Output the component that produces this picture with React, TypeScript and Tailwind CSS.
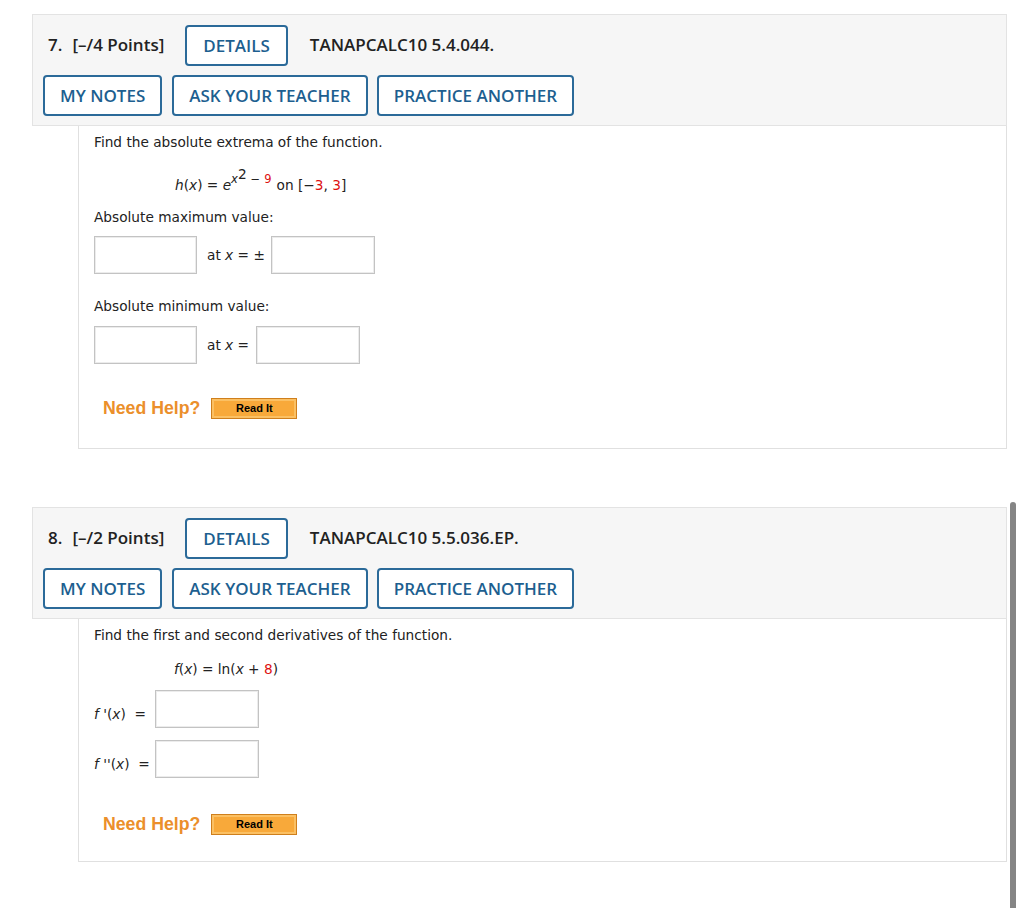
import React from "react";

const HEAD_FONT = { fontFamily: '"Open Sans", "Liberation Sans", sans-serif' };
const BODY_FONT = { fontFamily: '"DejaVu Sans", Verdana, sans-serif' };
const HELP_FONT = { fontFamily: '"Liberation Sans", Arial, sans-serif' };

function BlueButton({ label, className = "" }: { label: string; className?: string }) {
  return (
    <button
      className={
        "h-[41px] border-2 border-[#2b6a99] rounded-[4px] bg-white text-[17px] font-semibold text-[#1d5f90] leading-none " +
        className
      }
      style={HEAD_FONT}
    >
      {label}
    </button>
  );
}

function Header({ num, points, code }: { num: number; points: number; code: string }) {
  return (
    <div
      className="bg-[#f6f6f6] border border-[#e3e3e3] pt-[10px] pb-[9px] pl-[10px]"
      style={HEAD_FONT}
    >
      <div className="flex items-center h-[40px]">
        <span className="ml-[5px] text-[17px] font-semibold text-[#222]">
          {num}.<span className="ml-[10px]">[–/{points} Points]</span>
        </span>
        <BlueButton label="DETAILS" className="ml-[21px] h-[40px] px-[16px]" />
        <span className="ml-[22px] text-[17px] font-semibold text-[#222]">{code}</span>
      </div>
      <div className="flex items-center mt-[10px]">
        <BlueButton label="MY NOTES" className="px-[15px]" />
        <BlueButton label="ASK YOUR TEACHER" className="ml-[10px] px-[15px]" />
        <BlueButton label="PRACTICE ANOTHER" className="ml-[9px] px-[15px]" />
      </div>
    </div>
  );
}

function Box({ w = 104 }: { w?: number }) {
  return (
    <div
      className={
        "h-[38px] border border-[#c3c3c3] bg-white shadow-[inset_0_0_0_1px_#ececec] " +
        (w === 104 ? "w-[104px]" : "w-[103px]")
      }
    />
  );
}

function NeedHelp() {
  return (
    <div className="flex items-center ml-[9px] h-[20px]">
      <span className="text-[17.7px] font-bold text-[#eb8f2b]" style={HELP_FONT}>
        Need Help?
      </span>
      <span
        className="ml-[11px] w-[86px] h-[21px] flex items-center justify-center bg-[#f8a93a] border border-[#cf7f1c] shadow-[inset_0_0_0_2px_#fbc063] text-[11px] font-bold text-black"
        style={HELP_FONT}
      >
        Read It
      </span>
    </div>
  );
}

function Red({ children }: { children: React.ReactNode }) {
  return <span className="text-[#d11]">{children}</span>;
}

export default function App() {
  return (
    <div className="relative min-h-[908px] bg-white pl-[32px] pt-[14px] text-[#222]">
      {/* question 7 */}
      <div className="w-[975px]">
        <Header num={7} points={4} code="TANAPCALC10 5.4.044." />
        <div
          className="ml-[46px] border border-t-0 border-[#e0e0e0] pl-[15px] pt-[6px] pb-[30px] text-[13.7px] leading-[20px]"
          style={BODY_FONT}
        >
          <div>Find the absolute extrema of the function.</div>
          <div className="mt-[23px] pl-[81px] h-[20px] flex items-baseline">
            <i>h</i>(<i>x</i>)&nbsp;=&nbsp;<i>e</i>
            <span className="relative -top-[7px] text-[11.5px] leading-none">
              <i>x</i>
              <span className="relative -top-[4px] text-[13.7px]">2</span>
              <span className="ml-[4px]">−</span>
              <span className="ml-[4px]">
                <Red>9</Red>
              </span>
            </span>
            <span className="ml-[5px]">
              on [−<Red>3</Red>, <Red>3</Red>]
            </span>
          </div>
          <div className="mt-[12px]">Absolute maximum value:</div>
          <div className="mt-[9px] flex items-center">
            <Box w={103} />
            <span className="ml-[10px]">
              at <i>x</i> = ±
            </span>
            <span className="ml-[6px]">
              <Box />
            </span>
          </div>
          <div className="mt-[22px]">Absolute minimum value:</div>
          <div className="mt-[10px] flex items-center">
            <Box w={103} />
            <span className="ml-[10px]">
              at <i>x</i> =
            </span>
            <span className="ml-[7px]">
              <Box />
            </span>
          </div>
          <div className="mt-[34px]">
            <NeedHelp />
          </div>
        </div>
      </div>

      {/* question 8 */}
      <div className="w-[975px] mt-[58px]">
        <Header num={8} points={2} code="TANAPCALC10 5.5.036.EP." />
        <div
          className="ml-[46px] border border-t-0 border-[#e0e0e0] pl-[15px] pt-[6px] pb-[27px] text-[13.7px] leading-[20px]"
          style={BODY_FONT}
        >
          <div>Find the first and second derivatives of the function.</div>
          <div className="mt-[14px] pl-[80px]">
            <i>f</i>(<i>x</i>)&nbsp;=&nbsp;ln(<i>x</i> + <Red>8</Red>)
          </div>
          <div className="mt-[11px] flex items-center">
            <span className="w-[61px] pt-[10px]">
              <i>f</i> '(<i>x</i>)&nbsp;&nbsp;=
            </span>
            <Box />
          </div>
          <div className="mt-[12px] flex items-center">
            <span className="w-[61px] pt-[10px]">
              <i>f</i> ''(<i>x</i>)&nbsp;&nbsp;=
            </span>
            <Box />
          </div>
          <div className="mt-[36px]">
            <NeedHelp />
          </div>
        </div>
      </div>

      {/* scrollbar thumb */}
      <div className="absolute left-[1010px] top-[502px] w-[6px] h-[406px] rounded-t-[3px] bg-[#858585]" />
    </div>
  );
}
